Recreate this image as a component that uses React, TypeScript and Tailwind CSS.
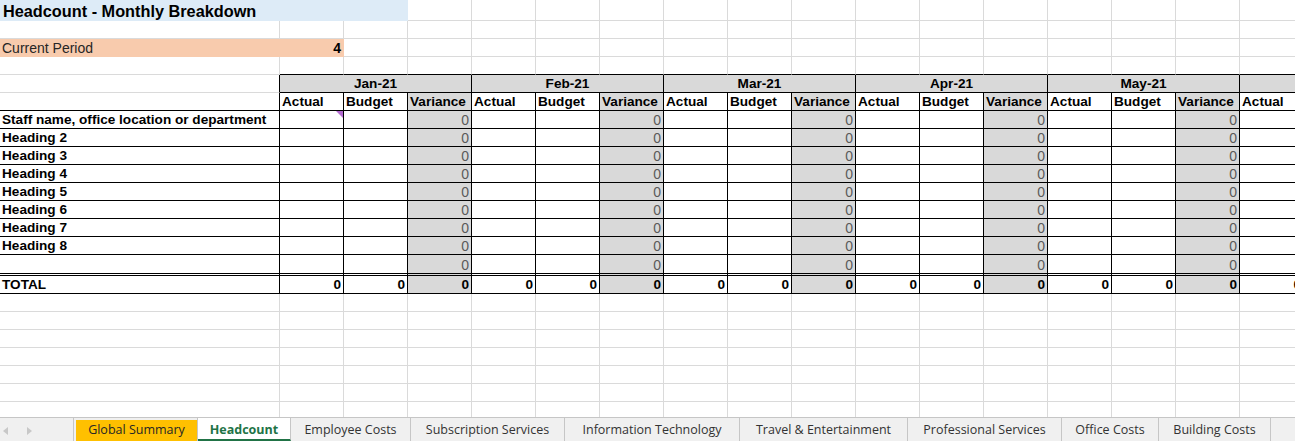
import type { ReactNode } from "react";

const GRID_R = "border-r-[#dadada]";
const GRID_B = "border-b-[#dadada]";

const months = ["Jan-21", "Feb-21", "Mar-21", "Apr-21", "May-21", ""];
const rowLabels = [
  "Staff name, office location or department",
  "Heading 2",
  "Heading 3",
  "Heading 4",
  "Heading 5",
  "Heading 6",
  "Heading 7",
  "Heading 8",
];

const tabs = [
  { name: "Employee Costs", w: "w-[120px]" },
  { name: "Subscription Services", w: "w-[154px]" },
  { name: "Information Technology", w: "w-[175px]" },
  { name: "Travel & Entertainment", w: "w-[168px]" },
  { name: "Professional Services", w: "w-[154px]" },
  { name: "Office Costs", w: "w-[97px]" },
  { name: "Building Costs", w: "w-[112px]" },
];

function Cell({
  w = "w-[64px]",
  r = GRID_R,
  b = GRID_B,
  className = "",
  children,
}: {
  w?: string;
  r?: string;
  b?: string;
  className?: string;
  children?: ReactNode;
}) {
  return (
    <div
      className={`${w} relative shrink-0 flex items-end border-r border-b ${r} ${b} overflow-hidden whitespace-nowrap leading-[16px] ${className}`}
    >
      {children}
    </div>
  );
}

function blanks(n: number, b = GRID_B) {
  return Array.from({ length: n }, (_, i) => <Cell key={i} b={b} />);
}

function GridRow() {
  return (
    <div className="flex h-[18px]">
      <Cell w="w-[280px]" />
      {blanks(16)}
    </div>
  );
}

function DataRow({ label, last }: { label: string; last?: boolean }) {
  const b = last ? "border-b-[3px] border-double border-b-black" : "border-b-black";
  return (
    <div className={`flex ${last ? "h-[21px]" : "h-[18px]"}`}>
      <Cell w="w-[280px]" r="border-r-black" b={b} className="pl-[2px] font-bold text-[13.6px]">
        {label}
      </Cell>
      {months.map((m, i) => (
        <div key={m + i} className="flex">
          <Cell r="border-r-black" b={b}>
            {i === 0 && label.startsWith("Staff") && (
              <span className="absolute right-0 top-0 w-0 h-0 border-l-[7px] border-l-transparent border-t-[7px] border-t-[#b36ad0]" />
            )}
          </Cell>
          <Cell r="border-r-black" b={b} />
          <Cell r="border-r-black" b={b} className="bg-[#d9d9d9] justify-end pr-[2px] text-[14px] text-[#5a5a5a]">
            0
          </Cell>
        </div>
      ))}
    </div>
  );
}

export default function App() {
  return (
    <div className="w-[1295px] h-[441px] overflow-hidden bg-white text-black font-['Liberation_Sans',Arial,sans-serif]">
      <div className="h-[417px] overflow-hidden">
        {/* title */}
        <div className="flex h-[21px]">
          <Cell
            w="w-[408px]"
            r="border-r-[#ddebf7]"
            b="border-b-[#ddebf7]"
            className="bg-[#ddebf7] pl-[3px] font-bold text-[16.3px] leading-[18px]"
          >
            Headcount - Monthly Breakdown
          </Cell>
          {blanks(14)}
        </div>
        <GridRow />
        {/* current period */}
        <div className="flex h-[18px]">
          <Cell
            w="w-[344px]"
            r="border-r-[#f8cbad]"
            b="border-b-[#f8cbad]"
            className="bg-[#f8cbad] justify-between px-[2px] text-[14px] text-[#262626]"
          >
            <span>Current Period</span>
            <span className="font-bold text-black">4</span>
          </Cell>
          {blanks(15)}
        </div>
        {/* spacer row, bottom edge boxes the month headers */}
        <div className="flex h-[18px]">
          <Cell w="w-[280px]" />
          {blanks(16, "border-b-black")}
        </div>
        {/* month headers */}
        <div className="flex h-[18px]">
          <Cell w="w-[280px]" r="border-r-black" />
          {months.map((m, i) => (
            <Cell
              key={m + i}
              w="w-[192px]"
              r="border-r-black"
              b="border-b-black"
              className="bg-[#d9d9d9] justify-center font-bold text-[13.6px]"
            >
              {m}
            </Cell>
          ))}
        </div>
        {/* sub headers */}
        <div className="flex h-[18px]">
          <Cell w="w-[280px]" r="border-r-black" b="border-b-black" />
          {months.map((m, i) => (
            <div key={m + i} className="flex font-bold text-[13.6px]">
              <Cell r="border-r-black" b="border-b-black" className="pl-[2px]">
                Actual
              </Cell>
              <Cell r="border-r-black" b="border-b-black" className="pl-[2px]">
                Budget
              </Cell>
              <Cell r="border-r-black" b="border-b-black" className="bg-[#d9d9d9] pl-[2px]">
                Variance
              </Cell>
            </div>
          ))}
        </div>
        {rowLabels.map((l) => (
          <DataRow key={l} label={l} />
        ))}
        <DataRow label="" last />
        {/* total */}
        <div className="flex h-[18px] font-bold text-[13.6px]">
          <Cell w="w-[280px]" r="border-r-black" b="border-b-black" className="pl-[2px]">
            TOTAL
          </Cell>
          {months.map((m, i) => (
            <div key={m + i} className="flex">
              <Cell r="border-r-black" b="border-b-black" className="justify-end pr-[2px]">
                0
              </Cell>
              <Cell r="border-r-black" b="border-b-black" className="justify-end pr-[2px]">
                0
              </Cell>
              <Cell r="border-r-black" b="border-b-black" className="bg-[#d9d9d9] justify-end pr-[2px]">
                0
              </Cell>
            </div>
          ))}
        </div>
        {Array.from({ length: 7 }, (_, i) => (
          <GridRow key={i} />
        ))}
      </div>

      {/* sheet tabs */}
      <div className="flex h-[24px] bg-[#f0f0f0] border-t border-[#c6c6c6] font-['Open_Sans',sans-serif] text-[12.5px] text-[#333]">
        <div className="w-[73px] shrink-0 flex items-center gap-[19px] pl-[3px] pt-[2px]">
          <svg width="5" height="8" viewBox="0 0 5 8">
            <path d="M5 0 L0 4 L5 8 Z" fill="#c8c8c8" />
          </svg>
          <svg width="5" height="8" viewBox="0 0 5 8">
            <path d="M0 0 L5 4 L0 8 Z" fill="#c8c8c8" />
          </svg>
        </div>
        <div className="w-[125px] shrink-0 border-l border-r border-[#c6c6c6] pt-[2px] pl-[2px]">
          <div className="h-full bg-[#ffc000] flex items-center justify-center text-[#262626]">
            Global Summary
          </div>
        </div>
        <div className="w-[93px] shrink-0 bg-white border-r border-[#c6c6c6] border-b-2 border-b-[#217346] flex items-center justify-center font-bold text-[#217346] pt-[3px]">
          Headcount
        </div>
        {tabs.map((t) => (
          <div
            key={t.name}
            className={`${t.w} shrink-0 flex items-center justify-center border-r border-[#c6c6c6] pt-[2px]`}
          >
            {t.name}
          </div>
        ))}
      </div>
    </div>
  );
}
